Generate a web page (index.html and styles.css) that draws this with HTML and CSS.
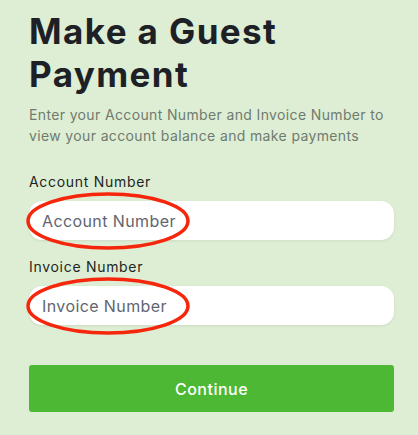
FILE: index.html
```html
<!DOCTYPE html>
<html lang="en">
<head>
<meta charset="utf-8">
<title>Make a Guest Payment</title>
<link rel="stylesheet" href="styles.css">
</head>
<body>
<main class="page">
  <h1 class="title">Make a Guest Payment</h1>
  <p class="intro">Enter your Account Number and Invoice Number to view your account balance and make payments</p>
  <form class="form">
    <div class="field">
      <label class="label" for="acct">Account Number</label>
      <div class="control">
        <input class="input" id="acct" type="text" placeholder="Account Number">
        <svg class="mark" viewBox="0 0 164 58" aria-hidden="true"><ellipse cx="82" cy="29" rx="80" ry="27" fill="none" stroke="#f5260c" stroke-width="3.5"/></svg>
      </div>
    </div>
    <div class="field">
      <label class="label" for="inv">Invoice Number</label>
      <div class="control">
        <input class="input" id="inv" type="text" placeholder="Invoice Number">
        <svg class="mark" viewBox="0 0 164 58" aria-hidden="true"><ellipse cx="82" cy="29" rx="80" ry="27" fill="none" stroke="#f5260c" stroke-width="3.5"/></svg>
      </div>
    </div>
    <button class="btn" type="button">Continue</button>
  </form>
</main>
</body>
</html>
```

FILE: styles.css
```css
html, body {
  margin: 0;
  padding: 0;
  background: #deeed5;
}
.page {
  padding: 10px 24px 0 29px;
  font-family: Inter, "Open Sans", sans-serif;
}
.title {
  margin: 0;
  font-size: 35px;
  line-height: 43px;
  font-weight: 700;
  color: #1d2125;
  letter-spacing: 1.4px;
  max-width: 300px;
}
.intro {
  margin: 9px 0 0;
  font-size: 14px;
  line-height: 20.5px;
  color: #6f7b6e;
  letter-spacing: 0.36px;
}
.form {
  margin-top: 26px;
  display: flex;
  flex-direction: column;
  gap: 17px;
}
.field {
  display: flex;
  flex-direction: column;
  gap: 9px;
}
.label {
  font-size: 14px;
  line-height: 20px;
  color: #1f2522;
  letter-spacing: 0.7px;
}
.control {
  position: relative;
}
.input {
  box-sizing: border-box;
  width: 100%;
  height: 39px;
  border: none;
  border-radius: 13px;
  background: #fff;
  box-shadow: 0 1px 3px rgba(0, 0, 0, 0.08);
  padding: 0 13px;
  font-family: inherit;
  font-size: 16px;
  letter-spacing: 0.4px;
  color: #222;
  outline: none;
}
.input::placeholder {
  color: #5f6670;
}
.mark {
  position: absolute;
  left: -3px;
  top: -9px;
  width: 164px;
  height: 58px;
  pointer-events: none;
}
.btn {
  margin-top: 23px;
  height: 47px;
  border: none;
  border-radius: 3px;
  background: #4cb833;
  color: #fff;
  font-family: inherit;
  font-size: 16px;
  font-weight: 500;
  letter-spacing: 0.5px;
}
```
